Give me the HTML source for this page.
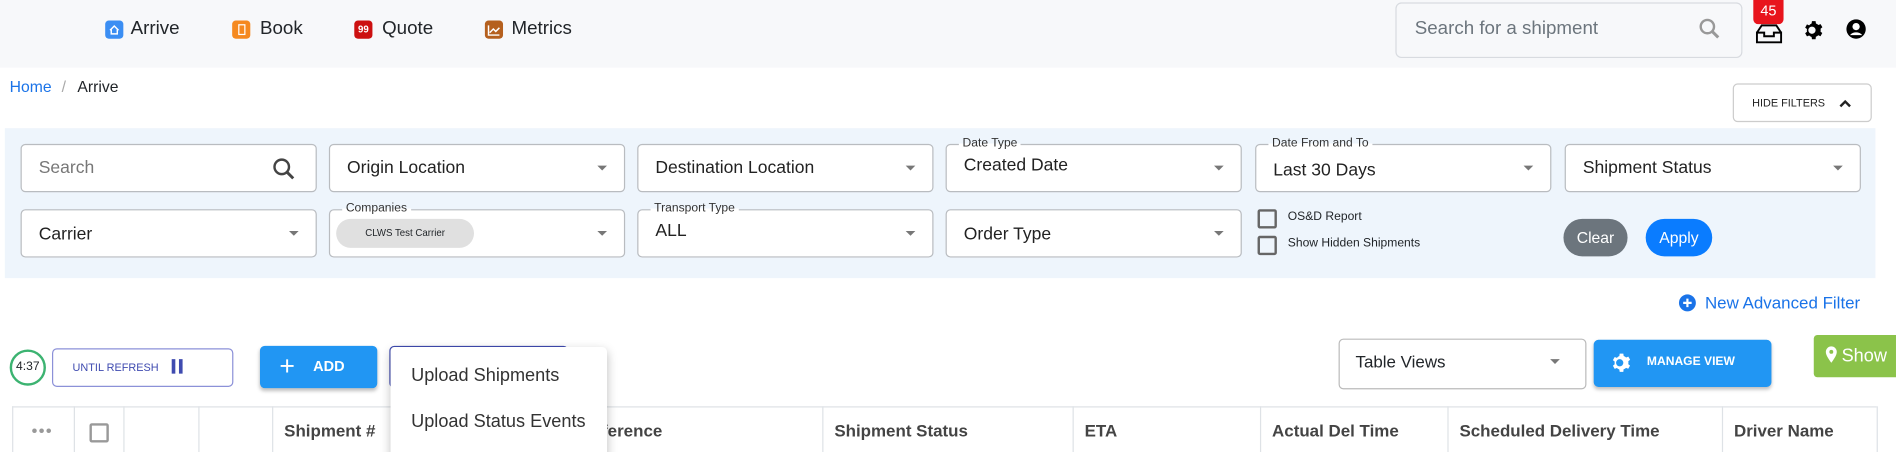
<!DOCTYPE html>
<html><head><meta charset="utf-8"><style>
*{box-sizing:border-box;margin:0;padding:0}
html,body{width:1896px;height:452px;overflow:hidden;background:#fff}
#w{position:absolute;left:0;top:0;width:1568px;height:374px;overflow:hidden;transform:scale(1.20918);transform-origin:0 0;font-family:"Liberation Sans",sans-serif;color:#212529}
.a{position:absolute}
.nav{left:0;top:0;width:1568px;height:56px;background:#f7f8fa}
.ni{font-size:15.5px;top:15px}
.ic{width:15px;height:15px;border-radius:3px;top:17px}
.f{position:absolute;background:#fff;border:1px solid #b9bcc0;border-radius:4px;width:245px;height:40px}
.f span{position:absolute;left:14px;top:11px;font-size:14.5px;color:#222}
.car{position:absolute;right:14px;top:17px;width:0;height:0;border-left:4px solid transparent;border-right:4px solid transparent;border-top:4px solid #777}
.lb{position:absolute;top:-7px;left:10px;font-size:10px;background:linear-gradient(#eef5fc 50%,#fff 50%);padding:0 3px;color:#333}
.th{position:absolute;top:348px;font-size:14px;font-weight:bold;color:#444}
.vl{position:absolute;top:336px;width:1px;height:38px;background:#dee2e6}
</style></head><body><div id="w">
<div class="a nav"></div>
<div class="a ic" style="left:87px;background:#3b8ef3"><svg width="15" height="15" viewBox="0 0 15 15"><path d="M4 8L7.5 4.5 11 8M5 7.5V11h5V7.5" fill="none" stroke="#fff" stroke-width="1.2"/></svg></div>
<div class="a ni" style="left:108px">Arrive</div>
<div class="a ic" style="left:192px;background:#f5891f"><div class="a" style="left:5px;top:3px;width:6px;height:9px;border:1px solid #fff"></div></div>
<div class="a ni" style="left:215px">Book</div>
<div class="a ic" style="left:293px;background:#cc1010;color:#fff;font-size:8px;text-align:center;line-height:15px;font-weight:bold">99</div>
<div class="a ni" style="left:316px">Quote</div>
<div class="a ic" style="left:401px;background:#b5601e"><svg width="15" height="15"><path d="M3 4v8h9M4 10l3-3 2 2 3-3" fill="none" stroke="#fff" stroke-width="1.2"/></svg></div>
<div class="a ni" style="left:423px">Metrics</div>
<div class="a" style="left:1154px;top:2px;width:287px;height:46px;border:1px solid #d8dbe0;border-radius:5px;background:#f7f8fa"></div>
<div class="a" style="left:1170px;top:15px;font-size:15.5px;color:#6c757d">Search for a shipment</div>
<svg class="a" style="left:1405px;top:15px" width="18" height="18"><circle cx="7" cy="7" r="5.5" fill="none" stroke="#999" stroke-width="2"/><path d="M11 11l5 5" stroke="#999" stroke-width="2.5"/></svg>
<svg class="a" style="left:1452px;top:20px" width="22" height="16"><path d="M1 7h6v3h8V7h6v8H1zM1 7l4-6h12l4 6" fill="none" stroke="#000" stroke-width="1.6"/></svg>
<div class="a" style="left:1450px;top:0;width:25px;height:20px;background:#e8141c;border-radius:0 0 4px 4px;color:#fff;font-size:12px;text-align:center;line-height:19px">45</div>
<svg class="a" style="left:1491px;top:16px" width="18" height="18" viewBox="0 0 24 24"><path d="M12 8a4 4 0 100 8 4 4 0 000-8zm9.4 5.5l2 1.6-2 3.5-2.4-1a8 8 0 01-2.7 1.6L16 22h-4l-.4-2.6a8 8 0 01-2.7-1.6l-2.4 1-2-3.5 2-1.6a8 8 0 010-3l-2-1.6 2-3.5 2.4 1A8 8 0 0111.6 4.6L12 2h4l.4 2.6a8 8 0 012.7 1.6l2.4-1 2 3.5-2 1.6a8 8 0 010 3z" transform="translate(-2 0)" fill="#000"/></svg>
<svg class="a" style="left:1526px;top:15px" width="18" height="18" viewBox="0 0 18 18"><circle cx="9" cy="9" r="8" fill="#000"/><circle cx="9" cy="7" r="3" fill="#fff"/><path d="M4 14c2-3 8-3 10 0" fill="#fff"/></svg>
<div class="a" style="left:8px;top:64px;font-size:13px;color:#1a73e8">Home</div>
<div class="a" style="left:51px;top:64px;font-size:13px;color:#aaa">/</div>
<div class="a" style="left:64px;top:64px;font-size:13px">Arrive</div>
<div class="a" style="left:1433px;top:69px;width:115px;height:32px;border:1px solid #ccc;border-radius:4px;background:#fff"></div>
<div class="a" style="left:1449px;top:80px;font-size:9px;color:#222">HIDE FILTERS</div>
<svg class="a" style="left:1520px;top:81px" width="12" height="9"><path d="M2 7l4-4 4 4" fill="none" stroke="#222" stroke-width="2"/></svg>
<div class="a" style="left:4px;top:106px;width:1547px;height:124px;background:#eef5fc"></div>
<div class="f" style="left:17px;top:119px"><span style="color:#777">Search</span><svg class="a" style="right:16px;top:10px" width="20" height="20"><circle cx="8" cy="8" r="6" fill="none" stroke="#444" stroke-width="2"/><path d="M12.5 12.5l5 5" stroke="#444" stroke-width="2.4"/></svg></div>
<div class="f" style="left:272px;top:119px"><span>Origin Location</span><i class="car"></i></div>
<div class="f" style="left:527px;top:119px"><span>Destination Location</span><i class="car"></i></div>
<div class="f" style="left:782px;top:119px"><div class="lb">Date Type</div><span style="top:9px">Created Date</span><i class="car"></i></div>
<div class="f" style="left:1038px;top:119px"><div class="lb">Date From and To</div><span style="top:13px">Last 30 Days</span><i class="car"></i></div>
<div class="f" style="left:1294px;top:119px"><span>Shipment Status</span><i class="car"></i></div>
<div class="f" style="left:17px;top:173px"><span style="top:12px">Carrier</span><i class="car"></i></div>
<div class="f" style="left:272px;top:173px"><div class="lb">Companies</div><div class="a" style="left:5px;top:7px;width:114px;height:24px;border-radius:12px;background:#e0e0e0;font-size:8px;text-align:center;line-height:24px">CLWS Test Carrier</div><i class="car"></i></div>
<div class="f" style="left:527px;top:173px"><div class="lb">Transport Type</div><span style="top:9px">ALL</span><i class="car"></i></div>
<div class="f" style="left:782px;top:173px"><span style="top:12px">Order Type</span><i class="car"></i></div>
<div class="a" style="left:1040px;top:173px;width:16px;height:16px;border:2px solid #666;border-radius:2px"></div>
<div class="a" style="left:1065px;top:174px;font-size:10px">OS&amp;D Report</div>
<div class="a" style="left:1040px;top:195px;width:16px;height:16px;border:2px solid #666;border-radius:2px"></div>
<div class="a" style="left:1065px;top:196px;font-size:10px">Show Hidden Shipments</div>
<div class="a" style="left:1293px;top:181px;width:53px;height:31px;border-radius:16px;background:#6c757d;color:#fff;font-size:13px;text-align:center;line-height:31px">Clear</div>
<div class="a" style="left:1361px;top:181px;width:55px;height:31px;border-radius:16px;background:#0a7cff;color:#fff;font-size:13px;text-align:center;line-height:31px">Apply</div>
<svg class="a" style="left:1388px;top:243px" width="15" height="15"><circle cx="7.5" cy="7.5" r="7" fill="#1a73e8"/><path d="M7.5 4v7M4 7.5h7" stroke="#fff" stroke-width="1.8"/></svg>
<div class="a" style="left:1410px;top:242px;font-size:14px;color:#1a73e8">New Advanced Filter</div>
<div class="a" style="left:8px;top:289px;width:30px;height:30px;border:2px solid #3cb371;border-radius:50%;font-size:10px;text-align:center;line-height:26px">4:37</div>
<div class="a" style="left:43px;top:288px;width:150px;height:32px;border:1px solid #8c91d8;border-radius:4px"></div>
<div class="a" style="left:60px;top:299px;font-size:9px;color:#3f4bb0">UNTIL REFRESH</div>
<div class="a" style="left:142px;top:297px;width:3px;height:12px;background:#3f4bb0"></div><div class="a" style="left:148px;top:297px;width:3px;height:12px;background:#3f4bb0"></div>
<div class="a" style="left:215px;top:286px;width:97px;height:35px;background:#2196f3;border-radius:4px;box-shadow:0 2px 3px rgba(0,0,0,.25)"></div>
<div class="a" style="left:231px;top:290px;font-size:22px;color:#fff;font-weight:300">+</div>
<div class="a" style="left:259px;top:296px;font-size:12px;color:#fff;font-weight:bold">ADD</div>
<div class="a" style="left:322px;top:286px;width:148px;height:35px;border:1px solid #3f4bb0;border-radius:4px"></div>
<div class="a" style="left:1107px;top:280px;width:205px;height:42px;border:1px solid #bbb;border-radius:4px"></div>
<div class="a" style="left:1121px;top:291px;font-size:14px">Table Views</div>
<i class="car" style="position:absolute;left:1282px;top:297px"></i>
<div class="a" style="left:1318px;top:281px;width:147px;height:39px;background:#2196f3;border-radius:4px;box-shadow:0 2px 3px rgba(0,0,0,.25)"></div>
<svg class="a" style="left:1332px;top:291px" width="18" height="18" viewBox="0 0 24 24"><path d="M12 8a4 4 0 100 8 4 4 0 000-8zm9.4 5.5l2 1.6-2 3.5-2.4-1a8 8 0 01-2.7 1.6L16 22h-4l-.4-2.6a8 8 0 01-2.7-1.6l-2.4 1-2-3.5 2-1.6a8 8 0 010-3l-2-1.6 2-3.5 2.4 1A8 8 0 0111.6 4.6L12 2h4l.4 2.6a8 8 0 012.7 1.6l2.4-1 2 3.5-2 1.6a8 8 0 010 3z" transform="translate(-2 0)" fill="#fff"/></svg>
<div class="a" style="left:1362px;top:294px;font-size:10px;color:#fff;font-weight:bold">MANAGE VIEW</div>
<div class="a" style="left:1500px;top:277px;width:68px;height:35px;background:#8bc34a;border-radius:3px 0 0 3px"></div>
<svg class="a" style="left:1509px;top:286px" width="11" height="15"><path d="M5.5 14C1 8 1 6 1 5a4.5 4.5 0 019 0c0 1 0 3-4.5 9z" fill="#fff"/><circle cx="5.5" cy="5" r="1.6" fill="#8bc34a"/></svg>
<div class="a" style="left:1523px;top:286px;font-size:15px;color:#fff">Show</div>
<div class="a" style="left:10px;top:336px;width:1542px;height:1px;background:#dee2e6"></div>
<div class="vl" style="left:10px"></div><div class="vl" style="left:61px"></div><div class="vl" style="left:102px"></div><div class="vl" style="left:164px"></div><div class="vl" style="left:225px"></div><div class="vl" style="left:680px"></div><div class="vl" style="left:887px"></div><div class="vl" style="left:1042px"></div><div class="vl" style="left:1197px"></div><div class="vl" style="left:1424px"></div><div class="vl" style="left:1552px"></div>
<div class="a" style="left:26px;top:348px;font-size:14px;color:#999;letter-spacing:1px">•••</div>
<div class="a" style="left:74px;top:350px;width:16px;height:16px;border:2px solid #999;border-radius:2px"></div>
<div class="th" style="left:235px">Shipment #</div>
<div class="th" style="left:480px">Reference</div>
<div class="th" style="left:690px">Shipment Status</div>
<div class="th" style="left:897px">ETA</div>
<div class="th" style="left:1052px">Actual Del Time</div>
<div class="th" style="left:1207px">Scheduled Delivery Time</div>
<div class="th" style="left:1434px">Driver Name</div>
<div class="a" style="left:323px;top:287px;width:179px;height:100px;background:#fff;border-radius:4px;box-shadow:0 3px 8px rgba(0,0,0,.25)"></div>
<div class="a" style="left:340px;top:302px;font-size:15px;color:#333">Upload Shipments</div>
<div class="a" style="left:340px;top:340px;font-size:15px;color:#333">Upload Status Events</div>
</div></body></html>
